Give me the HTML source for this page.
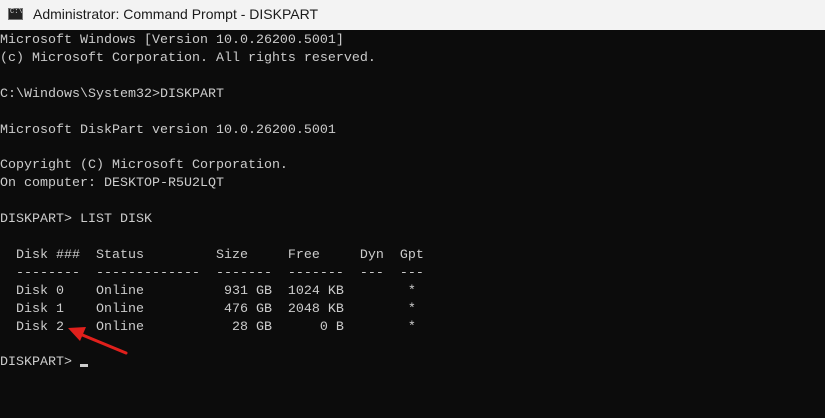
<!DOCTYPE html>
<html><head><style>
html,body{margin:0;padding:0;width:825px;height:418px;overflow:hidden;background:#0c0c0c}
#t{position:absolute;left:0;top:0;width:825px;height:30px;background:#f3f3f3;}
#t span{position:absolute;left:33px;top:6px;font:14px "Liberation Sans",sans-serif;color:#1a1a1a}
#ic{position:absolute;left:8px;top:8px;width:15px;height:12px;background:#222;border:1px solid #777;box-sizing:border-box}
#ic:after{content:"C:\\";position:absolute;left:1px;top:-1px;font:7px "Liberation Mono",monospace;color:#ddd}
pre{position:absolute;left:0;top:32px;margin:0;font:13.33px/17.9px "Liberation Mono",monospace;color:#cccccc}
</style></head><body>
<div id="t"><div id="ic"></div><span>Administrator: Command Prompt - DISKPART</span></div>
<pre>Microsoft Windows [Version 10.0.26200.5001]
(c) Microsoft Corporation. All rights reserved.

C:\Windows\System32&gt;DISKPART

Microsoft DiskPart version 10.0.26200.5001

Copyright (C) Microsoft Corporation.
On computer: DESKTOP-R5U2LQT

DISKPART&gt; LIST DISK

  Disk ###  Status         Size     Free     Dyn  Gpt
  --------  -------------  -------  -------  ---  ---
  Disk 0    Online          931 GB  1024 KB        *
  Disk 1    Online          476 GB  2048 KB        *
  Disk 2    Online           28 GB      0 B        *

DISKPART&gt; <span style="display:inline-block;width:8px;height:3px;background:#ccc;vertical-align:-2px"></span></pre>
<svg style="position:absolute;left:0;top:0" width="825" height="418">
<line x1="126" y1="353" x2="80" y2="334" stroke="#e0201c" stroke-width="3" stroke-linecap="round"/>
<polygon points="68,328 86,327 80,341" fill="#e0201c"/>
</svg>
</body></html>
